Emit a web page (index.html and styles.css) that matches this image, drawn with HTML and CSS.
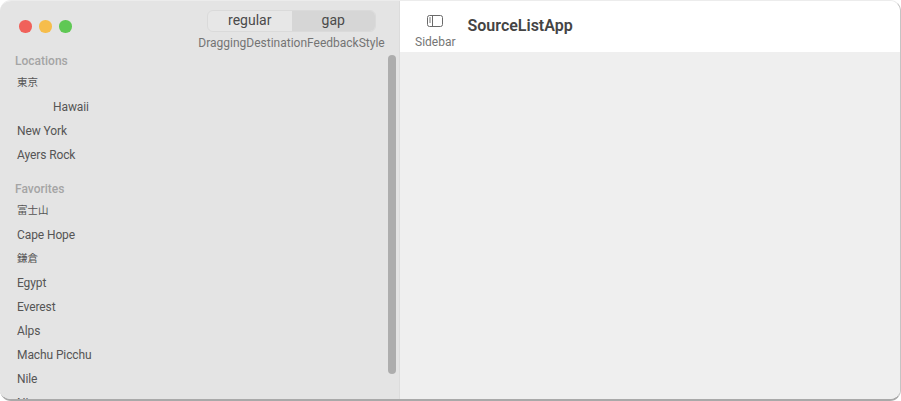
FILE: index.html
```html
<!DOCTYPE html>
<html lang="en">
<head>
<meta charset="utf-8">
<title>SourceListApp</title>
<link rel="stylesheet" href="styles.css">
</head>
<body>
<div class="window">
  <aside class="sidebar">
    <div class="side-top">
      <div class="traffic">
        <span class="light red"></span>
        <span class="light yellow"></span>
        <span class="light green"></span>
      </div>
      <div class="picker">
        <div class="segments">
          <div class="seg">regular</div>
          <div class="seg on">gap</div>
        </div>
        <div class="picker-label">DraggingDestinationFeedbackStyle</div>
      </div>
    </div>
    <div class="list">
      <div class="section">Locations</div>
      <div class="row cjk">東京</div>
      <div class="row nested">Hawaii</div>
      <div class="row">New York</div>
      <div class="row">Ayers Rock</div>
      <div class="section second">Favorites</div>
      <div class="row cjk">富士山</div>
      <div class="row">Cape Hope</div>
      <div class="row cjk">鎌倉</div>
      <div class="row">Egypt</div>
      <div class="row">Everest</div>
      <div class="row">Alps</div>
      <div class="row">Machu Picchu</div>
      <div class="row">Nile</div>
      <div class="row">Niagara</div>
    </div>
    <div class="scroller"></div>
  </aside>
  <main class="content">
    <header class="toolbar">
      <div class="tool">
        <svg class="tool-icon" width="16" height="12" viewBox="0 0 16 12" fill="none">
          <rect x="0.5" y="0.5" width="15" height="11" rx="2" stroke="#6a6a6a" stroke-width="1"/>
          <path d="M5.5 0.5V11.5" stroke="#6a6a6a" stroke-width="1"/>
          <path d="M2 3H4M2 5H4M2 7H4" stroke="#777" stroke-width="1"/>
        </svg>
        <span class="tool-label">Sidebar</span>
      </div>
      <h1 class="title">SourceListApp</h1>
    </header>
    <div class="detail"></div>
  </main>
</div>
</body>
</html>
```
FILE: styles.css
```css
* { box-sizing: border-box; }
html, body {
  margin: 0;
  width: 901px;
  height: 401px;
  overflow: hidden;
  background: #fff;
  font-family: Roboto, "Noto Sans CJK JP", "Liberation Sans", sans-serif;
}
.window {
  display: flex;
  width: 901px;
  height: 401px;
  border-radius: 11px;
  overflow: hidden;
  border-right: 1px solid #c4c4c4;
  border-bottom: 2px solid #a9a9a9;
  border-top: 1px solid #ececec;
}
.sidebar {
  position: relative;
  flex: 0 0 400px;
  background: #e4e4e4;
  border-right: 1px solid #dcdcdc;
  overflow: hidden;
}
.side-top {
  display: flex;
  height: 50px;
  padding-top: 9px;
}
.traffic {
  display: flex;
  gap: 7.5px;
  padding: 10px 0 0 19px;
}
.light {
  width: 12.5px;
  height: 12.5px;
  border-radius: 50%;
}
.red { background: #f0615a; }
.yellow { background: #f6bd4b; }
.green { background: #5fc854; }
.picker {
  margin-left: 127px;
  display: flex;
  flex-direction: column;
  align-items: center;
  width: 186px;
}
.segments {
  display: flex;
  width: 169px;
  height: 22px;
  border-radius: 6px;
  background: #e7e7e7;
  border: 1px solid #dadada;
  overflow: hidden;
}
.seg {
  flex: 1;
  text-align: center;
  font-size: 14px;
  line-height: 18px;
  color: #4a4a4a;
}
.seg.on {
  background: #d6d6d6;
}
.picker-label {
  margin-top: 3px;
  font-size: 12px;
  line-height: 16px;
  color: #747474;
  white-space: nowrap;
}
.list {
  padding: 0 0 0 17px;
}
.section {
  margin-left: -2px;
  font-size: 12px;
  line-height: 20px;
  font-weight: 500;
  color: #a5a5a5;
}
.section.second {
  margin-top: 12px;
}
.row {
  height: 24px;
  font-size: 12px;
  line-height: 24px;
  letter-spacing: -0.1px;
  color: #555;
  white-space: nowrap;
}
.row.cjk {
  font-size: 10.5px;
  letter-spacing: 0;
}
.nested {
  padding-left: 36px;
}
.scroller {
  position: absolute;
  top: 54px;
  left: 388px;
  width: 8px;
  height: 319px;
  border-radius: 4px;
  background: #adadad;
}
.content {
  flex: 1;
  display: flex;
  flex-direction: column;
}
.toolbar {
  flex: 0 0 51px;
  display: flex;
  background: #fff;
}
.tool {
  display: flex;
  flex-direction: column;
  align-items: center;
  padding: 14px 0 0 15px;
}
.tool-icon {
  display: block;
}
.tool-label {
  margin-top: 8px;
  font-size: 12px;
  line-height: 14px;
  color: #757575;
}
.title {
  margin: 15px 0 0 12px;
  font-size: 16px;
  line-height: 20px;
  font-weight: 600;
  color: #444;
}
.detail {
  flex: 1;
  background: #efefef;
}
```
